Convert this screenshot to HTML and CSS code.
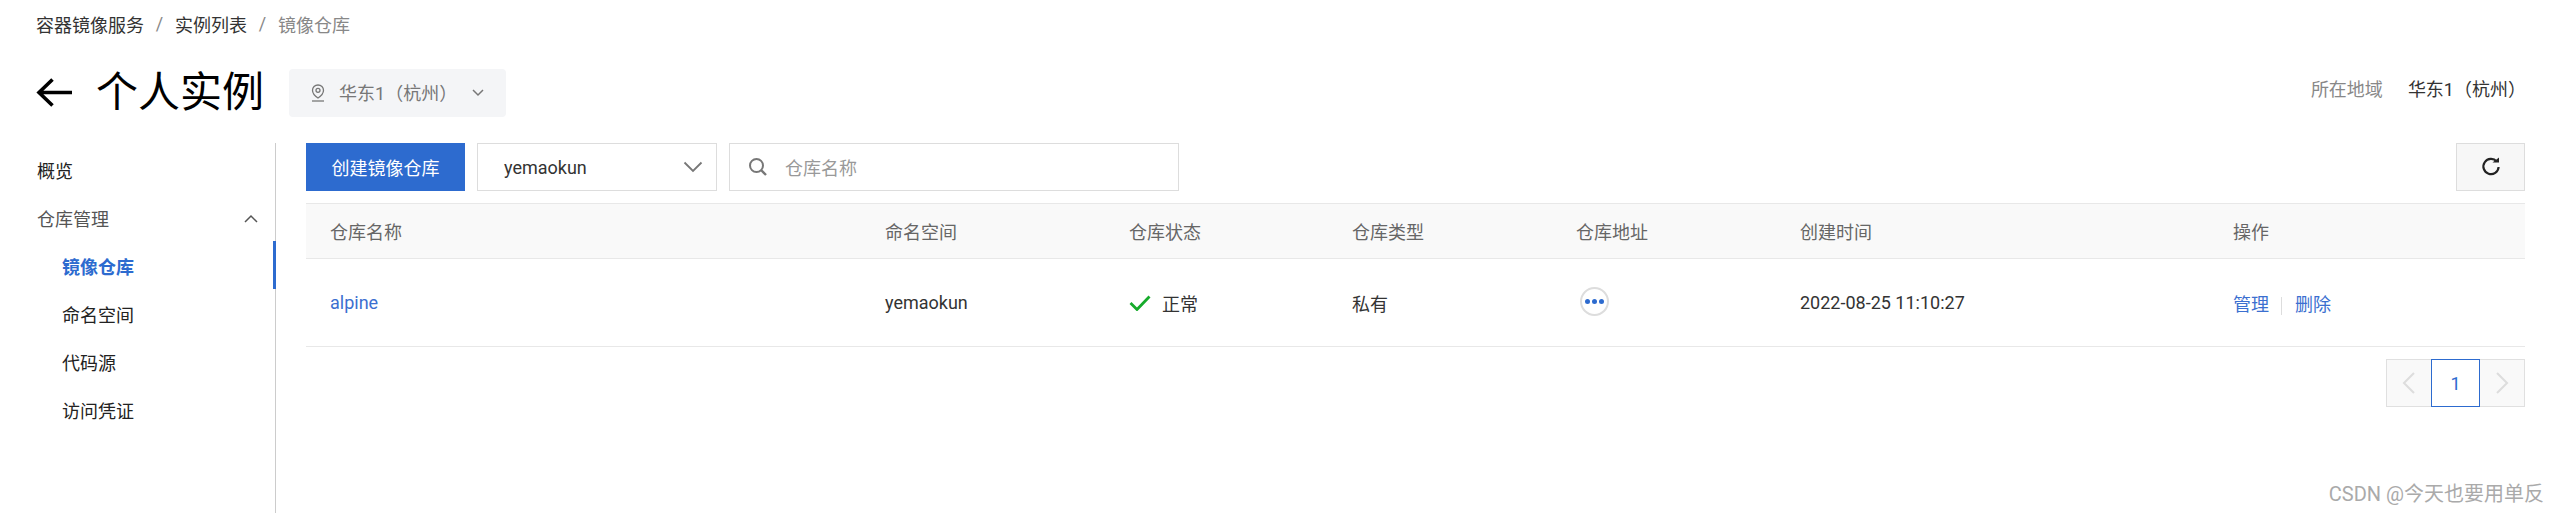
FILE: index.html
```html
<html>
<head>
  <meta charset="UTF-8">
  <title>镜像仓库</title>
  <link rel="stylesheet" href="styles.css">
</head>
<body>
  <div class="page">
    <div class="breadcrumb">
      <span>容器镜像服务</span>
      <span class="sep">/</span>
      <span>实例列表</span>
      <span class="sep">/</span>
      <span class="current">镜像仓库</span>
    </div>

    <div class="title-bar">
      <svg class="back" width="36" height="30" viewBox="0 0 36 30">
        <path d="M36 14.5H3M16.5 1.5L3 14.5L16.5 27.5" fill="none" stroke="#000" stroke-width="3.6"/>
      </svg>
      <h1>个人实例</h1>
      <div class="region">
        <svg width="14" height="18" viewBox="0 0 14 18">
          <path d="M7 1C3.8 1 1.5 3.4 1.5 6.3C1.5 9.5 4.8 12.6 7 14C9.2 12.6 12.5 9.5 12.5 6.3C12.5 3.4 10.2 1 7 1Z" fill="none" stroke="#777" stroke-width="1.3"/>
          <circle cx="7" cy="6.3" r="2" fill="none" stroke="#777" stroke-width="1.3"/>
          <path d="M1 17H13" stroke="#777" stroke-width="1.3"/>
        </svg>
        <span class="region-name">华东1（杭州）</span>
        <svg width="12" height="8" viewBox="0 0 12 8">
          <path d="M1 1L6 6L11 1" fill="none" stroke="#777" stroke-width="1.5"/>
        </svg>
      </div>
      <div class="location">
        <span class="location-label">所在地域</span>
        <span>华东1（杭州）</span>
      </div>
    </div>

    <div class="main">
      <div class="sidebar">
        <div class="nav-item">概览</div>
        <div class="nav-item nav-group">
          仓库管理
          <svg width="14" height="9" viewBox="0 0 14 9">
            <path d="M1 8L7 2L13 8" fill="none" stroke="#555" stroke-width="1.5"/>
          </svg>
        </div>
        <div class="nav-item nav-sub active">镜像仓库</div>
        <div class="nav-item nav-sub">命名空间</div>
        <div class="nav-item nav-sub">代码源</div>
        <div class="nav-item nav-sub">访问凭证</div>
      </div>

      <div class="content">
        <div class="toolbar">
          <button class="btn-create">创建镜像仓库</button>
          <div class="select">
            yemaokun
            <svg width="20" height="12" viewBox="0 0 20 12">
              <path d="M1.5 1.5L10 10L18.5 1.5" fill="none" stroke="#777" stroke-width="1.8"/>
            </svg>
          </div>
          <div class="search">
            <svg width="20" height="20" viewBox="0 0 20 20">
              <circle cx="8.5" cy="8.5" r="6.5" fill="none" stroke="#777" stroke-width="2"/>
              <path d="M13 13L18 18" stroke="#777" stroke-width="2.4"/>
            </svg>
            <span class="placeholder">仓库名称</span>
          </div>
          <button class="btn-refresh">
            <svg width="20" height="20" viewBox="0 0 20 20">
              <path d="M15.8 4.6A7.6 7.6 0 1 0 17.6 10" fill="none" stroke="#222" stroke-width="2.2"/>
              <path d="M11.5 5.6H18V0.6Z" fill="#222"/>
            </svg>
          </button>
        </div>

        <table>
          <thead>
            <tr>
              <th class="col-name">仓库名称</th>
              <th class="col-ns">命名空间</th>
              <th class="col-status">仓库状态</th>
              <th class="col-type">仓库类型</th>
              <th class="col-addr">仓库地址</th>
              <th class="col-time">创建时间</th>
              <th>操作</th>
            </tr>
          </thead>
          <tbody>
            <tr>
              <td><a class="link">alpine</a></td>
              <td>yemaokun</td>
              <td>
                <div class="status">
                  <svg width="22" height="16" viewBox="0 0 22 16">
                    <path d="M1.5 8L8 14.5L20.5 1.5" fill="none" stroke="#16ab2b" stroke-width="2.8"/>
                  </svg>
                  正常
                </div>
              </td>
              <td>私有</td>
              <td>
                <div class="more"><i></i><i></i><i></i></div>
              </td>
              <td>2022-08-25 11:10:27</td>
              <td>
                <a class="link">管理</a><span class="divider"></span><a class="link">删除</a>
              </td>
            </tr>
          </tbody>
        </table>

        <div class="pagination">
          <div class="page-btn">
            <svg width="14" height="24" viewBox="0 0 14 24">
              <path d="M12 2L2 12L12 22" fill="none" stroke="#ddd" stroke-width="2"/>
            </svg>
          </div>
          <div class="page-num">1</div>
          <div class="page-btn">
            <svg width="14" height="24" viewBox="0 0 14 24">
              <path d="M2 2L12 12L2 22" fill="none" stroke="#ddd" stroke-width="2"/>
            </svg>
          </div>
        </div>
      </div>
    </div>

    <div class="watermark">CSDN @今天也要用单反</div>
  </div>
</body>
</html>
```

FILE: styles.css
```css
html, body {
  margin: 0;
  padding: 0;
  background: #fff;
}
body {
  font-family: Roboto, "Noto Sans CJK SC", sans-serif;
  font-size: 18px;
  color: #333;
}
.page {
  position: relative;
  width: 2560px;
  height: 513px;
  overflow: hidden;
}
.breadcrumb {
  display: flex;
  align-items: center;
  height: 47px;
  padding-left: 36px;
}
.sep {
  width: 31px;
  text-align: center;
  color: #888;
}
.current {
  color: #888;
}
.title-bar {
  display: flex;
  align-items: center;
  height: 48px;
  margin-top: 22px;
  padding: 0 34px 0 36px;
}
.back {
  margin-right: 24px;
}
h1 {
  margin: 0 25px 0 0;
  font-size: 42px;
  font-weight: 400;
  color: #000;
  line-height: 48px;
}
.region {
  display: flex;
  align-items: center;
  width: 217px;
  height: 48px;
  box-sizing: border-box;
  padding-left: 22px;
  background: #f4f5f7;
  border-radius: 4px;
  color: #777;
}
.region-name {
  width: 133px;
  margin-left: 14px;
  padding-bottom: 2px;
}
.location {
  margin-left: auto;
  margin-bottom: 10px;
  display: flex;
  gap: 25px;
}
.location-label {
  color: #888;
}
.main {
  display: flex;
  margin-top: 26px;
}
.sidebar {
  position: relative;
  width: 276px;
  height: 370px;
  box-sizing: border-box;
  padding-top: 3px;
  border-right: 1px solid #ccc;
}
.nav-item {
  display: flex;
  align-items: center;
  height: 48px;
  padding-left: 37px;
  color: #222;
}
.nav-group {
  justify-content: space-between;
  padding-right: 17px;
  color: #555;
}
.nav-sub {
  padding-left: 62px;
}
.active {
  position: relative;
  color: #2d6bcf;
  font-weight: 700;
}
.active::after {
  content: "";
  position: absolute;
  right: -1px;
  top: -1px;
  width: 3px;
  height: 48px;
  background: #2d6bcf;
}
.content {
  width: 2219px;
  margin-left: 30px;
}
.toolbar {
  display: flex;
  gap: 12px;
  height: 48px;
  margin-bottom: 12px;
}
.btn-create {
  width: 159px;
  border: 0;
  background: #2d6bcf;
  color: #fff;
  font: inherit;
}
.select {
  display: flex;
  align-items: center;
  justify-content: space-between;
  width: 240px;
  box-sizing: border-box;
  padding: 0 13px 0 26px;
  border: 1px solid #ddd;
}
.search {
  display: flex;
  align-items: center;
  gap: 17px;
  width: 450px;
  box-sizing: border-box;
  padding-left: 18px;
  border: 1px solid #ddd;
}
.placeholder {
  color: #999;
}
.btn-refresh {
  display: flex;
  align-items: center;
  justify-content: center;
  width: 69px;
  margin-left: auto;
  padding: 0;
  background: #f7f7f7;
  border: 1px solid #ddd;
}
table {
  width: 100%;
  border-collapse: collapse;
  table-layout: fixed;
  font-size: inherit;
  color: inherit;
}
th, td {
  box-sizing: border-box;
  padding: 0 0 0 24px;
  text-align: left;
  font-weight: 400;
  border-bottom: 1px solid #e8e8e8;
}
th {
  height: 55px;
  background: #f9f9f9;
  color: #666;
  border-top: 1px solid #e8e8e8;
}
td {
  height: 88px;
}
.col-name { width: 555px; }
.col-ns { width: 244px; }
.col-status { width: 223px; }
.col-type { width: 224px; }
.col-addr { width: 224px; }
.col-time { width: 433px; }
.link {
  color: #3b6fd0;
}
.status {
  display: flex;
  align-items: center;
  gap: 11px;
}
.more {
  display: flex;
  align-items: center;
  justify-content: center;
  gap: 2px;
  width: 29px;
  height: 29px;
  margin: -2px 0 0 4px;
  box-sizing: border-box;
  border: 2px solid #ddd;
  border-radius: 50%;
}
.more i {
  width: 5px;
  height: 5px;
  border-radius: 50%;
  background: #2d6bcf;
}
.divider {
  display: inline-block;
  width: 1px;
  height: 18px;
  margin: 0 13px 0 12px;
  background: #ddd;
  vertical-align: middle;
}
.pagination {
  display: flex;
  justify-content: flex-end;
  margin-top: 12px;
  height: 48px;
}
.page-btn {
  display: flex;
  align-items: center;
  justify-content: center;
  width: 46px;
  box-sizing: border-box;
  background: #f9f9f9;
  border: 1px solid #e0e0e0;
}
.page-num {
  display: flex;
  align-items: center;
  justify-content: center;
  width: 49px;
  margin: 0 -1px;
  position: relative;
  box-sizing: border-box;
  border: 1px solid #2d6bcf;
  color: #2d6bcf;
  background: #fff;
}
.watermark {
  position: absolute;
  right: 16px;
  top: 481px;
  font-size: 20px;
  line-height: 26px;
  color: #aaa;
}
```
